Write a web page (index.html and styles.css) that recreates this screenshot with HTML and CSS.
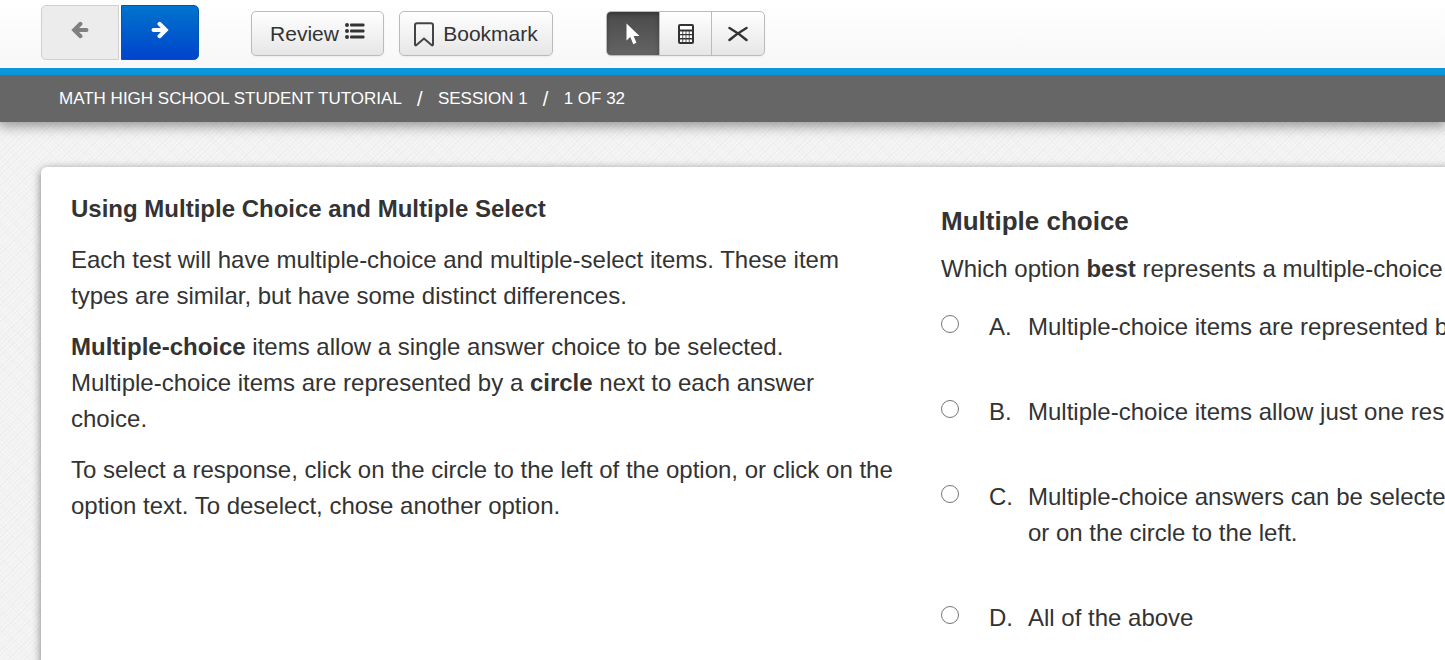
FILE: index.html
```
<!DOCTYPE html>
<html lang="en">
<head>
  <meta charset="UTF-8" />
  <meta name="viewport" content="width=device-width, initial-scale=1.0" />
  <title>Math High School Student Tutorial</title>
  <link rel="stylesheet" href="styles.css">
</head>
<body>

  <header class="toolbar">
    <div class="nav-buttons">
      <button class="nav-btn prev" aria-label="Previous" disabled>
        <svg width="18" height="18" viewBox="0 0 18 18"><path d="M9.500 2.800 L3.200 9 L9.500 15.200 M4 9 H15.500" /></svg>
      </button>
      <button class="nav-btn next" aria-label="Next">
        <svg width="18" height="18" viewBox="0 0 18 18"><path d="M8.500 2.800 L14.800 9 L8.500 15.200 M14 9 H2.500" /></svg>
      </button>
    </div>

    <button class="btn review">
      Review
      <svg width="20" height="16" viewBox="0 0 20 16">
        <circle cx="2" cy="2" r="2" /><circle cx="2" cy="8" r="2" /><circle cx="2" cy="14" r="2" />
        <rect x="5" y="0.500" width="14.500" height="3" rx="1" /><rect x="5" y="6.500" width="14.500" height="3" rx="1" /><rect x="5" y="12.500" width="14.500" height="3" rx="1" />
      </svg>
    </button>

    <button class="btn bookmark">
      <svg width="20" height="25" viewBox="0 0 20 25"><path d="M3 1.200 H17 Q19 1.200 19 3.200 V22.500 Q18.800 24 17.500 23 L10 16.500 L2.500 23 Q1.200 24 1 22.500 V3.200 Q1 1.200 3 1.200 Z" /></svg>
      Bookmark
    </button>

    <div class="tools">
      <button class="tool active" aria-label="Pointer">
        <svg width="14" height="22" viewBox="0 0 14 22"><path d="M0.500 0.500 V17.500 L4.300 14 L7.300 21.200 L10.500 19.800 L7.600 13 H13.500 Z" fill="#fff" /></svg>
      </button>
      <button class="tool" aria-label="Calculator">
        <svg width="16" height="20" viewBox="0 0 16 20">
          <rect width="16" height="20" rx="2" fill="#333" />
          <path fill="#fff" d="M2 2h12v3.500H2zM2 7.500h2.400v2.400H2zM5.200 7.500h2.400v2.400H5.200zM8.400 7.500h2.400v2.400H8.400zM11.600 7.500H14v2.400h-2.400zM2 11.300h2.400v2.700H2zM5.200 11.300h2.400v2.700H5.200zM8.400 11.300h2.400v2.700H8.400zM11.600 11.300H14v2.700h-2.400zM2 15.400h2.400V18H2zM5.200 15.400h2.400V18H5.200zM8.400 15.400h2.400V18H8.400zM11.600 15.400H14V18h-2.400z" />
        </svg>
      </button>
      <button class="tool" aria-label="Answer eliminator">
        <svg width="20" height="16" viewBox="0 0 20 16"><path d="M1.500 2 Q11 7.500 18.500 14 M18.500 2 Q9 7.500 1.500 14" fill="none" stroke="#333" stroke-width="2.500" stroke-linecap="round" /></svg>
      </button>
    </div>
  </header>

  <nav class="crumbs" aria-label="Progress">
    <span>MATH HIGH SCHOOL STUDENT TUTORIAL</span>
    <span class="sep">/</span>
    <span>SESSION 1</span>
    <span class="sep">/</span>
    <span>1 OF 32</span>
  </nav>

  <main>
    <div class="card">
      <section class="passage">
        <h1>Using Multiple Choice and Multiple Select</h1>
        <p>Each test will have multiple-choice and multiple-select items. These item types are similar, but have some distinct differences.</p>
        <p><strong>Multiple-choice</strong> items allow a single answer choice to be selected. <span class="nowrap">Multiple-choice</span> items are represented by a <strong>circle</strong> next to each answer choice.</p>
        <p>To select a response, click on the circle to the left of the option, or click on the option text. To deselect, chose another option.</p>
      </section>

      <section class="question">
        <h2>Multiple choice</h2>
        <p>Which option <strong>best</strong> represents a multiple-choice item?</p>
        <div class="options">
          <div class="option">
            <input type="radio" name="answer" id="a">
            <label for="a"><span class="letter">A.</span><span>Multiple-choice items are represented by a circle.</span></label>
          </div>
          <div class="option">
            <input type="radio" name="answer" id="b">
            <label for="b"><span class="letter">B.</span><span>Multiple-choice items allow just one response.</span></label>
          </div>
          <div class="option">
            <input type="radio" name="answer" id="c">
            <label for="c"><span class="letter">C.</span><span>Multiple-choice answers can be selected by clicking on the answer text<br>or on the circle to the left.</span></label>
          </div>
          <div class="option">
            <input type="radio" name="answer" id="d">
            <label for="d"><span class="letter">D.</span><span>All of the above</span></label>
          </div>
        </div>
      </section>
    </div>
  </main>

</body>
</html>
```
FILE: styles.css
```
* { margin: 0; padding: 0; box-sizing: border-box; }

body {
  font-family: "Liberation Sans", Arial, sans-serif;
  font-size: 24px;
  line-height: 36px;
  color: #333;
  background-color: #f5f5f5;
  background-image:
    repeating-linear-gradient(45deg, rgba(0, 0, 0, 0.02) 0 1px, transparent 1px 3px),
    repeating-linear-gradient(-45deg, rgba(0, 0, 0, 0.02) 0 1px, transparent 1px 4px);
  height: 100vh;
  overflow: hidden;
}

button {
  font-family: inherit;
  color: #333;
  cursor: pointer;
}

/* top toolbar */
.toolbar {
  position: relative;
  z-index: 1;
  display: flex;
  align-items: flex-start;
  padding: 5px 41px 8px;
  background: linear-gradient(#fff, #f7f7f7);
  border-bottom: 7px solid #0a97d9;
}

.nav-buttons {
  display: flex;
  gap: 2px;
  margin-right: 52px;
}

.nav-btn {
  width: 78px;
  height: 55px;
  padding-bottom: 5px;
  display: flex;
  align-items: center;
  justify-content: center;
}

.nav-btn svg {
  fill: none;
  stroke: #fff;
  stroke-width: 4;
  stroke-linecap: round;
}

.prev {
  background: #ececec;
  border: 1px solid #d0d0d0;
  border-radius: 5px 0 0 5px;
}

.prev svg { stroke: #808080; }

.next {
  background: linear-gradient(#0074cc, #0044cc);
  border: 1px solid #0055b3;
  border-radius: 0 5px 5px 0;
}

.btn, .tools {
  height: 45px;
  margin-top: 6px;
  border: 1px solid #bbb;
  border-radius: 5px;
  background: linear-gradient(#fff, #e6e6e6);
  box-shadow: 0 1px 2px rgba(0, 0, 0, 0.05);
}

.btn {
  display: flex;
  align-items: center;
  justify-content: center;
  font-size: 21px;
}

.review {
  width: 133px;
  gap: 6px;
  margin-right: 15px;
}

.review svg {
  fill: #333;
  margin-bottom: 5px;
}

.bookmark {
  width: 154px;
  gap: 9px;
  margin-right: 53px;
}

.bookmark svg {
  fill: none;
  stroke: #444;
  stroke-width: 2;
  margin-top: 2px;
}

.tools {
  display: flex;
  width: 159px;
  overflow: hidden;
}

.tool {
  flex: 1;
  display: flex;
  align-items: center;
  justify-content: center;
  border: none;
  border-left: 1px solid #bbb;
  background: none;
}

.tool.active {
  border-left: none;
  background: linear-gradient(#4a4a4a, #646464);
  box-shadow: inset 0 2px 4px rgba(0, 0, 0, 0.3);
}

/* breadcrumb bar */
.crumbs {
  display: flex;
  align-items: center;
  height: 47px;
  padding-left: 59px;
  font-size: 17px;
  color: #fff;
  background: #666;
  box-shadow: 0 2px 12px 2px rgba(0, 0, 0, 0.4);
}

.sep {
  width: 36px;
  text-align: center;
  font-size: 20px;
}

/* the item is wider than the window, it is cut at the right */
main {
  padding: 45px 0 0 41px;
}

.card {
  display: grid;
  grid-template-columns: 870px 870px;
  width: max-content;
  min-height: 100vh;
  padding: 24px 30px;
  background: #fff;
  border-radius: 6px;
  box-shadow: 0 2px 8px rgba(0, 0, 0, 0.5);
}

.passage { padding-right: 46px; }

.nowrap { white-space: nowrap; }

h1, h2 {
  font-size: 24px;
  line-height: 36px;
}

h1, .passage p { margin-bottom: 15px; }

.question { padding-top: 12px; }

h2 {
  font-size: 26px;
  margin-bottom: 12px;
}

.options {
  display: flex;
  flex-direction: column;
  gap: 49px;
  margin-top: 22px;
}

.option {
  display: flex;
  align-items: flex-start;
}

.option input {
  width: 18px;
  height: 18px;
  margin: 6px 30px 0 0;
}

.option label { display: flex; }

.letter { width: 39px; }
```
